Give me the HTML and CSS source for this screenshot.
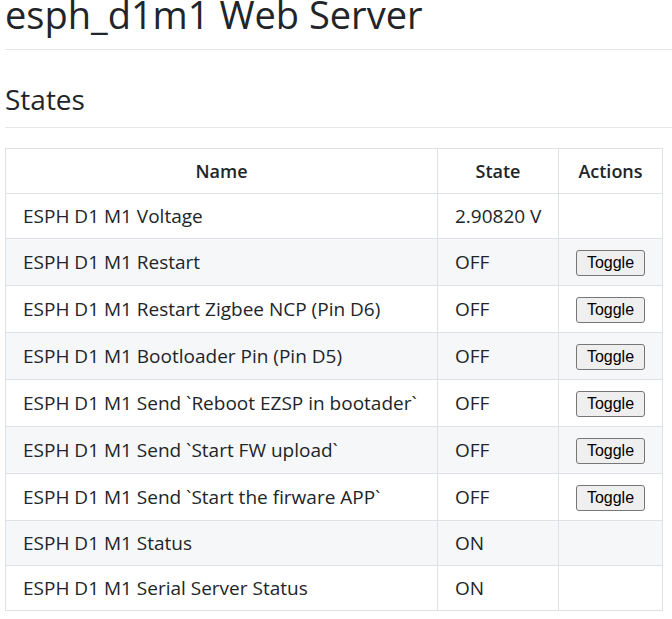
FILE: index.html
```html
<!DOCTYPE html>
<html lang="en">
<head>
<meta charset="utf-8">
<title>esph_d1m1 Web Server</title>
<link rel="stylesheet" href="styles.css">
</head>
<body>
<div class="page">
  <h1 class="title">esph_d1m1 Web Server</h1>
  <hr class="rule rule-top">
  <h2 class="section">States</h2>
  <hr class="rule rule-section">
  <table class="states">
    <colgroup>
      <col class="col-name">
      <col class="col-state">
      <col class="col-actions">
    </colgroup>
    <thead>
      <tr><th>Name</th><th>State</th><th>Actions</th></tr>
    </thead>
    <tbody>
      <tr><td>ESPH D1 M1 Voltage</td><td>2.90820 V</td><td class="act"></td></tr>
      <tr><td>ESPH D1 M1 Restart</td><td>OFF</td><td class="act"><button class="toggle">Toggle</button></td></tr>
      <tr><td>ESPH D1 M1 Restart Zigbee NCP (Pin D6)</td><td>OFF</td><td class="act"><button class="toggle">Toggle</button></td></tr>
      <tr><td>ESPH D1 M1 Bootloader Pin (Pin D5)</td><td>OFF</td><td class="act"><button class="toggle">Toggle</button></td></tr>
      <tr><td>ESPH D1 M1 Send `Reboot EZSP in bootader`</td><td>OFF</td><td class="act"><button class="toggle">Toggle</button></td></tr>
      <tr><td>ESPH D1 M1 Send `Start FW upload`</td><td>OFF</td><td class="act"><button class="toggle">Toggle</button></td></tr>
      <tr><td>ESPH D1 M1 Send `Start the firware APP`</td><td>OFF</td><td class="act"><button class="toggle">Toggle</button></td></tr>
      <tr><td>ESPH D1 M1 Status</td><td>ON</td><td class="act"></td></tr>
      <tr><td>ESPH D1 M1 Serial Server Status</td><td>ON</td><td class="act"></td></tr>
    </tbody>
  </table>
</div>
</body>
</html>
```
FILE: styles.css
```css
html, body {
  margin: 0;
  padding: 0;
  background: #ffffff;
}
body {
  font-family: "Open Sans", "Noto Sans", sans-serif;
  color: #212529;
  overflow: hidden;
}
.page {
  padding-left: 5px;
}
.title {
  margin: -6px 0 0 0;
  font-size: 38px;
  line-height: 40px;
  font-weight: 400;
}
.rule {
  border: 0;
  border-top: 1px solid #e6e6e6;
  height: 0;
  margin: 0;
}
.rule-top {
  margin-top: 15px;
}
.section {
  margin: 33px 0 0 0;
  font-size: 28px;
  line-height: 32px;
  font-weight: 400;
}
.rule-section {
  margin-top: 12px;
  margin-bottom: 20px;
}
.states {
  border-collapse: collapse;
  table-layout: fixed;
  width: 657px;
  font-size: 19px;
  line-height: 26px;
  border: 1px solid #dee2e6;
}
.col-name { width: 432px; }
.col-state { width: 121px; }
.col-actions { width: 104px; }
.states th, .states td {
  border: 1px solid #dee2e6;
  padding: 9px 17px;
  text-align: left;
  white-space: nowrap;
}
.states th {
  text-align: center;
  font-size: 18px;
  font-weight: 600;
}
.states td.act {
  text-align: center;
  padding-left: 0;
  padding-right: 0;
}
.states tbody tr:nth-child(even) {
  background: #f6f7f9;
}
.toggle {
  font-family: "Liberation Sans", Arial, sans-serif;
  font-size: 16px;
  line-height: 18px;
  height: 26px;
  padding: 3px 10px;
  margin-top: 2px;
  vertical-align: top;
  color: #000000;
  background: #efefef;
  border: 1px solid #767676;
  border-radius: 3px;
  box-sizing: border-box;
}
```
